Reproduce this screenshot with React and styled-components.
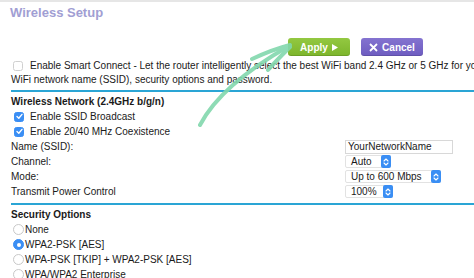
import styled, { createGlobalStyle } from 'styled-components';

const GlobalStyle = createGlobalStyle`
  html, body {
    margin: 0;
    padding: 0;
    background: #fff;
    overflow: hidden;
  }
  body {
    font-family: "Liberation Sans", Arial, sans-serif;
    color: #1a1a1a;
  }
`;

const Page = styled.div`
  position: relative;
  width: 474px;
  height: 278px;
  overflow: hidden;
  border-top: 2px solid #e6e6e6;
  box-sizing: border-box;
`;

const Title = styled.h1`
  margin: 0;
  padding: 3px 0 0 10px;
  height: 20px;
  font-size: 13px;
  line-height: 16px;
  font-weight: bold;
  color: #a19ed3;
`;

const ButtonRow = styled.div`
  display: flex;
  justify-content: flex-end;
  gap: 11px;
  padding: 13px 51px 0 0;
  height: 18px;
`;

const Button = styled.button`
  width: ${p => p.$w}px;
  height: 18px;
  border: none;
  border-radius: 3px;
  padding: 0;
  display: flex;
  align-items: center;
  justify-content: center;
  gap: 4px;
  font-family: "Liberation Sans", Arial, sans-serif;
  font-size: 10px;
  font-weight: bold;
  color: #fff;
  background: ${p => p.$bg};
  box-shadow: inset 0 -1px 0 rgba(0, 0, 0, 0.12);
`;

const Intro = styled.div`
  padding: 3px 0 0 11px;
  width: 600px;
  font-size: 10px;
  line-height: 14px;
  white-space: nowrap;
`;

const IntroLine = styled.div`
  display: flex;
  align-items: center;
  gap: 7px;
  height: 14px;
  padding-left: ${p => (p.$indent ? 2 : 0)}px;
`;

const Rule = styled.div`
  height: 2px;
  margin: ${p => p.$top}px 0 0 11px;
  background: #2aa5d5;
`;

const Section = styled.div`
  padding: ${p => p.$top}px 0 0 11px;
  font-size: 10px;
`;

const SectionTitle = styled.div`
  font-weight: bold;
  height: 14px;
  line-height: 14px;
`;

const OptionRow = styled.div`
  display: flex;
  align-items: center;
  gap: ${p => p.$gap ?? 6}px;
  height: 15px;
  padding-left: ${p => p.$indent ?? 3}px;
  white-space: nowrap;
`;

const Box = styled.span`
  width: 10px;
  height: 10px;
  border-radius: 2.5px;
  box-sizing: border-box;
  flex: none;
  display: flex;
  align-items: center;
  justify-content: center;
  background: ${p => (p.$on ? '#3a8ef4' : '#fff')};
  border: 1px solid ${p => (p.$on ? '#3a8ef4' : '#d0d0d0')};
`;

const Radio = styled.span`
  width: 11px;
  height: 11px;
  border-radius: 50%;
  box-sizing: border-box;
  flex: none;
  display: flex;
  align-items: center;
  justify-content: center;
  background: ${p => (p.$on ? '#3a8ef4' : '#fff')};
  border: 1px solid ${p => (p.$on ? '#3a8ef4' : '#c8c8c8')};
  &::after {
    content: '';
    display: ${p => (p.$on ? 'block' : 'none')};
    width: 4px;
    height: 4px;
    border-radius: 50%;
    background: #fff;
  }
`;

const FieldRow = styled.div`
  display: grid;
  grid-template-columns: 334px auto;
  align-items: center;
  height: 15px;
  white-space: nowrap;
`;

const TextBox = styled.div`
  width: 108px;
  height: 14px;
  box-sizing: border-box;
  border: 1px solid #d8d8d8;
  padding-left: 2px;
  font-size: 10px;
  line-height: 12px;
`;

const Select = styled.div`
  width: ${p => p.$w}px;
  height: 13px;
  display: flex;
  align-items: center;
  justify-content: space-between;
  box-sizing: border-box;
  border: 1px solid #e2e2e2;
  border-radius: 2px;
  padding-left: 5px;
  font-size: 10px;
  background: #fff;
`;

const Stepper = styled.span`
  width: 10px;
  height: 13px;
  border-radius: 2px;
  background: #3a8ef4;
  display: flex;
  align-items: center;
  justify-content: center;
  margin-right: -1px;
`;

const Arrow = styled.svg`
  position: absolute;
  left: 0;
  top: 0;
  pointer-events: none;
`;

const Check = () => (
  <svg width="7" height="7" viewBox="0 0 7 7">
    <path d="M1 3.6 L2.8 5.3 L6 1.4" fill="none" stroke="#fff" strokeWidth="1.4" strokeLinecap="round" strokeLinejoin="round" />
  </svg>
);

const Updown = () => (
  <svg width="6" height="10" viewBox="0 0 6 10">
    <path d="M1 4 L3 2 L5 4 M1 6 L3 8 L5 6" fill="none" stroke="#fff" strokeWidth="1.1" strokeLinecap="round" strokeLinejoin="round" />
  </svg>
);

const Dropdown = ({ w, children }) => (
  <Select $w={w}>
    <span>{children}</span>
    <Stepper><Updown /></Stepper>
  </Select>
);

const fields = [
  ['Name (SSID):', <TextBox key="n">YourNetworkName</TextBox>],
  ['Channel:', <Dropdown key="c" w={46}>Auto</Dropdown>],
  ['Mode:', <Dropdown key="m" w={96}>Up to 600 Mbps</Dropdown>],
  ['Transmit Power Control', <Dropdown key="t" w={48}>100%</Dropdown>],
];

const security = [
  ['None', false],
  ['WPA2-PSK [AES]', true],
  ['WPA-PSK [TKIP] + WPA2-PSK [AES]', false],
  ['WPA/WPA2 Enterprise', false],
];

export default function App() {
  return (
    <>
      <GlobalStyle />
      <Page>
        <Title>Wireless Setup</Title>
        <ButtonRow>
          <Button $w={62} $bg="linear-gradient(#93c841, #7cb52c)">
            Apply
            <svg width="6" height="7" viewBox="0 0 6 7"><path d="M0 0 L6 3.5 L0 7 Z" fill="#fff" /></svg>
          </Button>
          <Button $w={62} $bg="linear-gradient(#8473d0, #6d5cc0)">
            <svg width="9" height="9" viewBox="0 0 9 9"><path d="M1 1 L8 8 M8 1 L1 8" stroke="#fff" strokeWidth="1.8" /></svg>
            Cancel
          </Button>
        </ButtonRow>

        <Intro>
          <IntroLine $indent>
            <Box />
            <span>Enable Smart Connect - Let the router intelligently select the best WiFi band 2.4 GHz or 5 GHz for your</span>
          </IntroLine>
          <IntroLine>WiFi network name (SSID), security options and password.</IntroLine>
        </Intro>

        <Rule $top={3} />

        <Section $top={3}>
          <SectionTitle>Wireless Network (2.4GHz b/g/n)</SectionTitle>
          <OptionRow><Box $on><Check /></Box>Enable SSID Broadcast</OptionRow>
          <OptionRow><Box $on><Check /></Box>Enable 20/40 MHz Coexistence</OptionRow>
          {fields.map(([label, control]) => (
            <FieldRow key={label}>
              <span>{label}</span>
              {control}
            </FieldRow>
          ))}
        </Section>

        <Rule $top={4} />

        <Section $top={3}>
          <SectionTitle>Security Options</SectionTitle>
          {security.map(([label, on]) => (
            <OptionRow key={label} $indent={2} $gap={1}>
              <Radio $on={on} />
              {label}
            </OptionRow>
          ))}
        </Section>

        <Arrow width="474" height="278" viewBox="0 0 474 278">
          <g fill="none" stroke="#82d8ad" strokeWidth="4" strokeLinecap="round" strokeLinejoin="round" opacity="0.9">
            <path d="M200 123 C 212 100, 240 72, 289 44" />
            <path d="M252 57 C 265 51, 278 46, 290 43" />
            <path d="M268 68 C 275 60, 283 52, 290 45" />
          </g>
        </Arrow>
      </Page>
    </>
  );
}
